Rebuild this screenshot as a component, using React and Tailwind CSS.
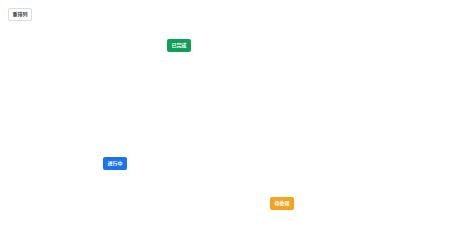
import React from 'react';

// status tags scattered over a free canvas
const tags = [
  { label: '已完成', cls: 'bg-[#0f9d58] left-[167px] top-[39px]' },
  { label: '进行中', cls: 'bg-[#1a73e8] left-[103px] top-[157px]' },
  { label: '待处理', cls: 'bg-[#f4a321] left-[270px] top-[197px]' },
];

export default function App() {
  return (
    <div
      className="relative w-[474px] h-[248px] bg-white overflow-hidden"
      style={{ fontFamily: '"Liberation Sans", "Noto Sans CJK SC", sans-serif' }}
    >
      <div className="p-2">
        <button className="w-[24px] h-[13px] flex items-center justify-center border border-[#dadce0] rounded-[2px] bg-white text-[5px] font-bold leading-none text-[#3c4043]">
          重排列
        </button>
      </div>
      {tags.map((t) => (
        <div
          key={t.label}
          className={`absolute w-[24px] h-[13px] flex items-center justify-center rounded-[2px] text-white text-[5px] font-bold leading-none ${t.cls}`}
        >
          {t.label}
        </div>
      ))}
    </div>
  );
}
